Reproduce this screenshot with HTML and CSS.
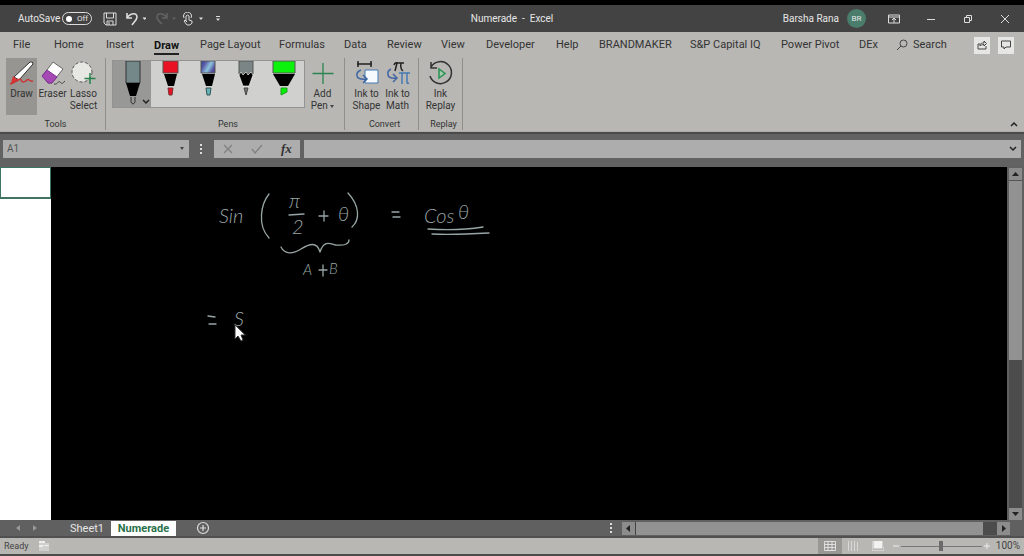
FILE: index.html
```html
<!DOCTYPE html>
<html lang="en">
<head>
<meta charset="utf-8">
<title>Numerade - Excel</title>
<link rel="stylesheet" href="styles.css">
</head>
<body>
<header class="titlebar">
  <div class="quick">
    <span id="autosave">AutoSave</span>
    <button class="toggle" aria-labelledby="autosave"><span class="knob"></span>Off</button>
    <button class="qbtn save" aria-label="Save"><svg width="14" height="14" viewBox="0 0 14 14"><path d="M1 1h12v12H3l-2-2zM3.500 1v5h7V1M4 13V9h6v4M6 10v3"/></svg></button>
    <button class="qbtn undo" aria-label="Undo"><svg width="20" height="14" viewBox="0 0 20 14"><path class="bold" d="M1 1v5h5M1 6C4 1 11 0 11 5c0 3-3 5-5 8"/><path class="solid" d="M16.500 5.500h4l-2 2.500z"/></svg></button>
    <button class="qbtn redo" aria-label="Redo"><svg width="20" height="14" viewBox="0 0 20 14"><path class="bold" d="M11 1v5H6M11 6C8 1 1 0 1 5c0 3 3 5 5 7"/><path class="solid" d="M16 5.500h4l-2 2.500z"/></svg></button>
    <button class="qbtn touch" aria-label="Touch mode"><svg width="20" height="14" viewBox="0 0 20 14"><path d="M1 6a4 4 0 1 1 7 0M3 9V4q1.500-2 3 0v4l3 1v2q-1 2-3 2H4L1 9l1-1 2 2"/><path class="solid" d="M16 5.500h4l-2 2.500z"/></svg></button>
    <button class="qbtn more" aria-label="Customize toolbar"><svg width="6" height="7" viewBox="0 0 6 7"><path class="solid" d="M1 1h4v1H1zM1 3.500h4L3 6z"/></svg></button>
  </div>
  <h1 class="doc">Numerade&nbsp; -&nbsp; Excel</h1>
  <div class="account">
    <span>Barsha Rana</span>
    <span class="avatar">BR</span>
    <button class="wbtn" aria-label="Ribbon display options"><svg width="12" height="10" viewBox="0 0 12 10"><path d="M.5 1h11v8H.5zM.5 3h11M6 9V4M4 6l2-2 2 2"/></svg></button>
    <button class="wbtn" aria-label="Minimize"><svg width="10" height="10" viewBox="0 0 10 10"><path d="M1 5.500h8"/></svg></button>
    <button class="wbtn" aria-label="Restore"><svg width="10" height="10" viewBox="0 0 10 10"><path d="M1.500 3.500h5v5h-5zM3.500 3.500v-2h5v5h-2"/></svg></button>
    <button class="wbtn" aria-label="Close"><svg width="10" height="10" viewBox="0 0 10 10"><path d="M1 1l8 8M9 1L1 9"/></svg></button>
  </div>
</header>

<nav class="tabs">
  <a href="#file">File</a><a href="#home">Home</a><a href="#insert">Insert</a><a href="#draw" class="current">Draw</a><a href="#layout">Page Layout</a><a href="#formulas">Formulas</a><a href="#data">Data</a><a href="#review">Review</a><a href="#view">View</a><a href="#developer">Developer</a><a href="#help">Help</a><a href="#brandmaker">BRANDMAKER</a><a href="#capital">S&amp;P Capital IQ</a><a href="#pivot">Power Pivot</a><a href="#dex">DEx</a>
  <a href="#search" class="search"><svg width="12" height="12" viewBox="0 0 12 12"><circle cx="7.500" cy="4.500" r="3.500"/><path d="M5 7l-4 4"/></svg>Search</a>
  <div class="share">
    <button aria-label="Share"><svg width="10" height="10" viewBox="0 0 10 10"><path d="M3 4H1v5h8V6M3 6c0-3 2-3 4-3V1l2.500 2.500L7 6V4.500C5 4.500 4 5 3 6z"/></svg></button>
    <button aria-label="Comments"><svg width="10" height="10" viewBox="0 0 10 10"><path d="M.5 1h9v6H5L3 9V7H.5z"/></svg></button>
  </div>
</nav>

<section class="ribbon">
  <div class="group tools">
    <div class="items">
      <button class="tool active"><svg width="28" height="28" viewBox="0 0 28 28"><path d="M6 18L22 3q3-1 3 2L11 21z" fill="#fff" stroke="#333"/><path d="M3 24l2-7 6 5z" fill="#d33"/><path d="M2 25c5-1 10-7 11-4s4 2 6 0 2 2 6 1" fill="none" stroke="#c33" stroke-width="1.500"/></svg>Draw</button>
      <button class="tool"><svg width="28" height="28" viewBox="0 0 28 28"><path d="M4 16L14 3l10 7-11 14H9z" fill="#fff" stroke="#666"/><path d="M3 17l5-6 10 7-5 6H9z" fill="#a54ab5" stroke="#7c3190"/><path d="M15 25c4 1 4-4 6-2s2 2 5-1" fill="none" stroke="#444"/></svg>Eraser</button>
      <button class="tool"><svg width="28" height="28" viewBox="0 0 28 28"><circle cx="12" cy="13" r="10" fill="#e7e7e4" stroke="#555" stroke-dasharray="3 2"/><path d="M20 14v11M14.500 19.500h11" stroke="#28824b" stroke-width="1.500"/></svg>Lasso<br>Select</button>
    </div>
    <h2>Tools</h2>
  </div>
  <div class="group pens">
    <div class="items">
      <div class="gallery">
        <button class="pen chosen" aria-label="Pen, gray"><svg width="38" height="46" viewBox="0 0 38 46"><path d="M13 0h14v22H13z" fill="#748789" stroke="#333"/><path d="M13 22h14l-4 13h-6z"/><path d="M18 36v5q2 4 4 0v-5" fill="none" stroke="#333"/><path d="M30 39l3 3 3-3" fill="none" stroke="#222" stroke-width="1.500"/></svg></button>
        <button class="pen" aria-label="Pen, red"><svg width="38" height="46" viewBox="0 0 38 46"><path d="M12 0h15v12H12z" fill="#e81224" stroke="#555"/><path d="M13 13h13l-3 12h-6z"/><path d="M17 27h5l-1 7h-3z" fill="#e81224" stroke="#733"/></svg></button>
        <button class="pen" aria-label="Pen, galaxy"><svg width="38" height="46" viewBox="0 0 38 46"><defs><linearGradient id="galaxy" x2="1" y2=".5"><stop stop-color="#264c90"/><stop offset=".3" stop-color="#5b58a8"/><stop offset=".65" stop-color="#8cc4dc"/><stop offset="1" stop-color="#514b9d"/></linearGradient></defs><path d="M12 0h14v12H12z" fill="url(#galaxy)" stroke="#555"/><path d="M13 13h13l-3 12h-6z"/><path d="M17 27h5l-1 7h-3z" fill="#65b3b9" stroke="#355"/></svg></button>
        <button class="pen" aria-label="Pencil"><svg width="38" height="46" viewBox="0 0 38 46"><path d="M12 0h14v13H12z" fill="#7b8586" stroke="#555"/><path d="M12 14l2-3 2 3 3-3 2 3 3-3 2 3-4 11h-6z" stroke="#fff" stroke-width=".6"/><path d="M17 27h4l-2 7z" fill="#777" stroke="#444"/></svg></button>
        <button class="pen" aria-label="Highlighter"><svg width="38" height="46" viewBox="0 0 38 46"><path d="M8 0h22v12H8z" fill="#0df20d" stroke="#555"/><path d="M8 13h22l-7 12h-8z"/><path d="M16 27h6v4l-6 3z" fill="#00f000" stroke="#292"/></svg></button>
      </div>
      <button class="tool"><svg width="28" height="28" viewBox="0 0 28 28"><path d="M14 4v21M3.500 14.500h21" stroke="#2b8450" stroke-width="1.300"/></svg><span>Add<br>Pen <i class="caret"></i></span></button>
    </div>
    <h2>Pens</h2>
  </div>
  <div class="group convert">
    <div class="items">
      <button class="tool"><svg width="28" height="28" viewBox="0 0 28 28"><path d="M4 5h15M5 2v6M18 2v6" stroke="#222" stroke-width="1.500"/><path d="M12 11h13v13H12z" fill="#f6faff" stroke="#4579b5"/><path d="M8 11q-5 2-4 6t10 3M10 16l4 4-4 4" fill="none" stroke="#4066a5" stroke-width="1.500"/></svg>Ink to<br>Shape</button>
      <button class="tool"><svg width="28" height="28" viewBox="0 0 28 28"><path d="M10 6q1-3 4-2h6M13 4l-2 8M17 4q-1 6 2 8" fill="none" stroke="#222" stroke-width="1.500"/><path d="M15 14h11M18 14v11M23 14v9q0 2 2 1" fill="none" stroke="#4579b5" stroke-width="1.500"/><path d="M7 10q-4 2-3 6t9 3M9 15l4 4-4 4" fill="none" stroke="#4066a5" stroke-width="1.500"/></svg>Ink to<br>Math</button>
    </div>
    <h2>Convert</h2>
  </div>
  <div class="group replay">
    <div class="items">
      <button class="tool"><svg width="28" height="28" viewBox="0 0 28 28"><path d="M4 8a11 11 0 1 1-1 9M4 3v6h6" fill="none" stroke="#333" stroke-width="1.500"/><path d="M12 10v9l6-4.500z" fill="#a7caaf" stroke="#299253" stroke-width="1.500"/></svg>Ink<br>Replay</button>
    </div>
    <h2>Replay</h2>
  </div>
  <button class="collapse" aria-label="Collapse ribbon"><svg width="8" height="6" viewBox="0 0 8 6"><path d="M1 5l3-3 3 3"/></svg></button>
</section>

<section class="formula">
  <div class="namebox"><input aria-label="Name box" value="A1"><i class="caret"></i></div>
  <span class="dots"></span>
  <div class="fx">
    <button aria-label="Cancel"><svg width="10" height="10" viewBox="0 0 10 10"><path d="M1 1l8 8M9 1L1 9"/></svg></button>
    <button aria-label="Enter"><svg width="12" height="10" viewBox="0 0 12 10"><path d="M1 5l3 4 7-8"/></svg></button>
    <button class="fn" aria-label="Insert function">fx</button>
  </div>
  <div class="entry"><input aria-label="Formula bar"><svg width="8" height="6" viewBox="0 0 8 6"><path d="M1 1l3 3 3-3"/></svg></div>
</section>

<main class="sheet">
  <div class="column"><div class="cell"></div></div>
  <div class="board">
    <svg class="ink" width="560" height="340" viewBox="51 167 560 340">
      <text x="219" y="223" class="word">Sin</text>
      <path d="M269 194c-8 10-12 31 0 44"/>
      <text x="289" y="208" class="word">π</text>
      <path d="M289 215l15-1"/>
      <text x="292" y="234" class="word">2</text>
      <path d="M319 216h9M324 211v10"/>
      <text x="338" y="221" class="word">θ</text>
      <path d="M348 193c12 13 12 27 4 34"/>
      <path d="M281 247c4 8 12 7 20 2 8-5 16-8 19 3 4-13 11-8 16-7q13 1 13-5"/>
      <text x="303" y="275" class="word small">A</text>
      <path d="M319 270h8M323 265v11"/>
      <text x="329" y="274" class="word small">B</text>
      <path d="M392 212h7M393 217h7"/>
      <text x="424" y="223" class="word">Cos</text><text x="458" y="219" class="word">θ</text>
      <path d="M428 229q30 2 55-2M432 234q20 1 57-1"/>
      <path d="M208 316l7 1M209 324h7"/>
      <text x="234" y="326" class="word">S</text>
      <path class="pointer" d="M235 325v14l3-3 3 5 2-1-2-5h4z"/>
    </svg>
  </div>
  <div class="vscroll">
    <button aria-label="Scroll up"><svg width="7" height="4" viewBox="0 0 7 4"><path d="M0 4l3.500-4L7 4z"/></svg></button>
    <div class="vtrack"><div class="vthumb"></div></div>
    <button aria-label="Scroll down"><svg width="7" height="4" viewBox="0 0 7 4"><path d="M0 0l3.500 4L7 0z"/></svg></button>
  </div>
</main>

<nav class="sheets">
  <div class="arrows">
    <button aria-label="Previous sheet"><svg width="4" height="6" viewBox="0 0 4 6"><path d="M4 0v6L0 3z"/></svg></button>
    <button aria-label="Next sheet"><svg width="4" height="6" viewBox="0 0 4 6"><path d="M0 0v6l4-3z"/></svg></button>
  </div>
  <a href="#sheet1">Sheet1</a>
  <a href="#numerade" class="open">Numerade</a>
  <button class="add" aria-label="New sheet"><svg width="14" height="14" viewBox="0 0 14 14"><circle cx="7" cy="7" r="5.500"/><path d="M4 7h6M7 4v6"/></svg></button>
  <span class="dots"></span>
  <div class="hscroll">
    <button aria-label="Scroll left"><svg width="4" height="7" viewBox="0 0 4 7"><path d="M4 0v7L0 3.500z"/></svg></button>
    <div class="htrack"><div class="hthumb"></div></div>
    <button aria-label="Scroll right"><svg width="4" height="7" viewBox="0 0 4 7"><path d="M0 0v7l4-3.500z"/></svg></button>
  </div>
</nav>

<footer class="status">
  <span>Ready</span>
  <svg class="macro" width="12" height="12" viewBox="0 0 12 12"><path d="M1 3h10v8H1z" fill="#cfcfcc"/><path d="M1 1h6v2H1zM1 5h4v2H1zM6 5h5v1H6z" fill="#eee"/></svg>
  <div class="views">
    <button class="on" aria-label="Normal view"><svg width="12" height="10" viewBox="0 0 12 10"><path d="M.5.500h11v9H.5zM.5 3.500h11M.5 6.500h11M4 0v10M8 0v10" opacity=".8"/></svg></button>
    <button aria-label="Page layout view"><svg width="12" height="10" viewBox="0 0 12 10"><path d="M.5 0v10M3.500 0v10M6.500 0v10M9.500 1v9" opacity=".6"/></svg></button>
    <button aria-label="Page break view"><svg width="12" height="10" viewBox="0 0 12 10"><path d="M2 0h8v7H2z" fill="#f2f2f0"/><path d="M.5 0v9.500h11V6" opacity=".5"/></svg></button>
  </div>
  <div class="zoom">
    <button aria-label="Zoom out"><svg width="8" height="8" viewBox="0 0 8 8"><path d="M1 4h6"/></svg></button>
    <input type="range" min="0" max="100" value="50" aria-label="Zoom">
    <button aria-label="Zoom in"><svg width="8" height="8" viewBox="0 0 8 8"><path d="M1 4h6M4 1v6"/></svg></button>
    <span class="percent">100%</span>
  </div>
</footer>
</body>
</html>
```
FILE: styles.css
```css
* { box-sizing: border-box; }
body {
  margin: 0;
  min-height: 100vh;
  display: flex;
  flex-direction: column;
  border-top: 5px solid #000;
  border-bottom: 2px solid #4c4c4c;
  background: #5f5f5f;
  color: #333;
  font: 10px/12px Roboto, "Open Sans", sans-serif;
}
button, input { font: inherit; color: inherit; border: 0; padding: 0; margin: 0; background: none; }
button { display: flex; align-items: center; justify-content: center; flex: none; }
a { color: inherit; text-decoration: none; }
svg { display: block; flex: none; }
h1, h2 { margin: 0; font-size: 10px; font-weight: 400; }
.caret { display: inline-block; border: 2px solid transparent; border-top: 3px solid #444; border-bottom: 0; vertical-align: middle; }

.titlebar { display: grid; grid-template-columns: 1fr auto 1fr; align-items: center; height: 27px; background: #434343; color: #e6e6e6; }
.titlebar svg { fill: none; stroke: #ddd; }
.titlebar .bold { stroke-width: 1.600; }
.titlebar .solid { fill: #ddd; stroke: none; }
.quick { display: flex; align-items: center; padding-left: 18px; }
#autosave { width: 44px; }
.toggle { gap: 5px; width: 30px; height: 13px; border: 1px solid #ddd; border-radius: 7px; font-size: 8px; }
.knob { width: 6px; height: 6px; border-radius: 50%; background: #fff; }
.save { margin-left: 11px; }
.undo { margin-left: 9px; }
.redo { margin-left: 10px; opacity: .2; }
.touch { margin-left: 7px; }
.more { margin-left: 12px; }
.doc { white-space: nowrap; }
.account { display: flex; align-items: center; justify-content: flex-end; padding-right: 12px; }
.avatar { width: 19px; height: 19px; margin: 0 21px 0 8px; border-radius: 50%; background: #4b7d6d; font-size: 8px; line-height: 19px; text-align: center; }
.wbtn { width: 14px; margin-right: 23px; }
.wbtn:last-child { margin-right: 0; }

.tabs { display: grid; grid-template-columns: 41px 52px 48px 46px 79px 65px 43px 54px 45px 70px 43px 91px 91px 78px 37px auto 1fr; align-items: center; height: 26px; padding-left: 13px; background: #b8b7b3; font-size: 11px; white-space: nowrap; }
.tabs a { line-height: 16px; }
.tabs .current { justify-self: start; margin-top: 3px; border-bottom: 2px solid #222; color: #111; font-weight: 700; line-height: 15px; }
.tabs svg { fill: none; stroke: #444; }
.search { display: flex; align-items: center; gap: 5px; }
.share { display: flex; justify-content: flex-end; gap: 8px; padding-right: 10px; }
.share button { width: 16px; height: 17px; background: #e6e6e4; }

.ribbon { display: flex; height: 74px; background: #b8b7b3; border-bottom: 1px solid #aaa; }
.group { display: flex; flex-direction: column; justify-content: space-between; margin-bottom: 1px; border-right: 1px solid #8f8e8b; }
.items { display: flex; align-items: flex-start; }
.group h2 { font-size: 9px; line-height: 12px; text-align: center; }
.tool { flex-direction: column; justify-content: flex-start; width: 31px; height: 57px; padding-top: 1px; white-space: nowrap; font-size: 10px; line-height: 12px; }
.tool svg { margin-bottom: 1px; }
.active { background: #969591; }
.tools { width: 106px; padding-left: 6px; }
.pens { width: 239px; padding-left: 6px; }
.pens .tool { margin-left: 2px; }
.gallery { display: flex; margin-top: 2px; padding-right: 1px; height: 48px; border: 1px solid #939393; background: #d0d0ce; }
.pen { width: 38px; height: 46px; }
.chosen { background: #989896; }
.convert { width: 74px; padding-left: 6px; }
.replay { width: 44px; padding-left: 6px; }
.collapse { align-self: flex-end; margin: 0 6px 4px auto; }
.collapse svg, .entry svg { fill: none; stroke: #222; stroke-width: 1.500; }

.formula { display: flex; align-items: center; height: 35px; padding: 0 3px 4px; border-top: 2px solid #4a4a4a; background: #626262; }
.formula > div { height: 18px; background: #adadad; }
.namebox { display: flex; align-items: center; width: 186px; padding: 0 5px 0 4px; }
.namebox input { flex: 1; min-width: 0; height: 18px; color: #555; }
.dots { width: 2px; height: 10px; margin: 0 12px 0 11px; background: repeating-linear-gradient(#ddd 0 2px, transparent 2px 4px); }
.fx { display: flex; align-items: center; gap: 18px; width: 86px; padding-left: 9px; }
.fx svg { fill: none; stroke: #808080; stroke-width: 1.300; }
.fn { font: italic 700 13px/16px "Liberation Serif", serif; }
.formula .entry { display: flex; flex: 1; align-items: center; margin-left: 4px; padding-right: 4px; }
.entry input { flex: 1; min-width: 0; }

.sheet { display: flex; flex: 1; background: #000; }
.column { width: 51px; background: #fff; }
.cell { height: 32px; border: 1px solid #3f7460; border-bottom-width: 2px; }
.board { flex: 1; min-width: 0; overflow: hidden; }
.ink { fill: none; stroke: #98a5a5; stroke-width: 1.300; stroke-linecap: round; stroke-linejoin: round; }
.ink text { fill: #98a5a5; stroke: none; }
.word { font: italic 300 20px "Lato", sans-serif; }
.small { font-size: 15px; }
.ink .pointer { fill: #fff; stroke: #333; stroke-width: 1; }
.vscroll { display: flex; flex-direction: column; width: 17px; padding: 1px 2px 0; background: #606060; }
.vscroll button { width: 13px; height: 12px; background: #8c8c8c; }
.vscroll svg, .hscroll svg { fill: #222; }
.vtrack { flex: 1; background: #4c4c4c; }
.vthumb { height: 55%; border-top: 1px solid #555; background: #929292; }

.sheets { display: flex; align-items: center; height: 18px; border-bottom: 2px solid #505050; background: #606060; color: #e5e5e5; font-size: 11px; line-height: 15px; }
.arrows { display: flex; gap: 13px; width: 70px; padding-left: 16px; fill: #999; }
.sheets a { width: 41px; }
.sheets .open { width: 65px; background: #fff; color: #28704a; font-weight: 700; text-align: center; }
.add { margin-left: 20px; }
.add svg { fill: none; stroke: #ddd; stroke-width: 1.200; }
.sheets .dots { margin: 0 9px 0 auto; }
.hscroll { display: flex; align-items: center; width: 38%; height: 13px; padding-left: 1px; margin-right: 14px; }
.hscroll button { width: 13px; height: 13px; background: #8c8c8c; }
.htrack { flex: 1; height: 13px; background: #4c4c4c; }
.hthumb { width: 96%; height: 13px; border-left: 1px solid #444; background: #929292; }

.status { display: flex; align-items: center; height: 16px; padding: 0 4px; background: #b8b7b3; color: #444; font-size: 9px; }
.macro { margin-left: 9px; }
.views { display: flex; height: 16px; margin: 0 2px 0 auto; }
.views button { width: 24px; height: 16px; }
.views .on { background: #999895; }
.status button svg { fill: none; stroke: #eee; }
.zoom { display: flex; align-items: center; }
.zoom input { width: 81px; height: 14px; margin: 0 1px; appearance: none; background: linear-gradient(#777, #777) center / 100% 1px no-repeat; }
.zoom input::-webkit-slider-thumb { appearance: none; width: 4px; height: 10px; background: #6b6b6b; }
.percent { margin-left: 5px; font-size: 10px; }
```
